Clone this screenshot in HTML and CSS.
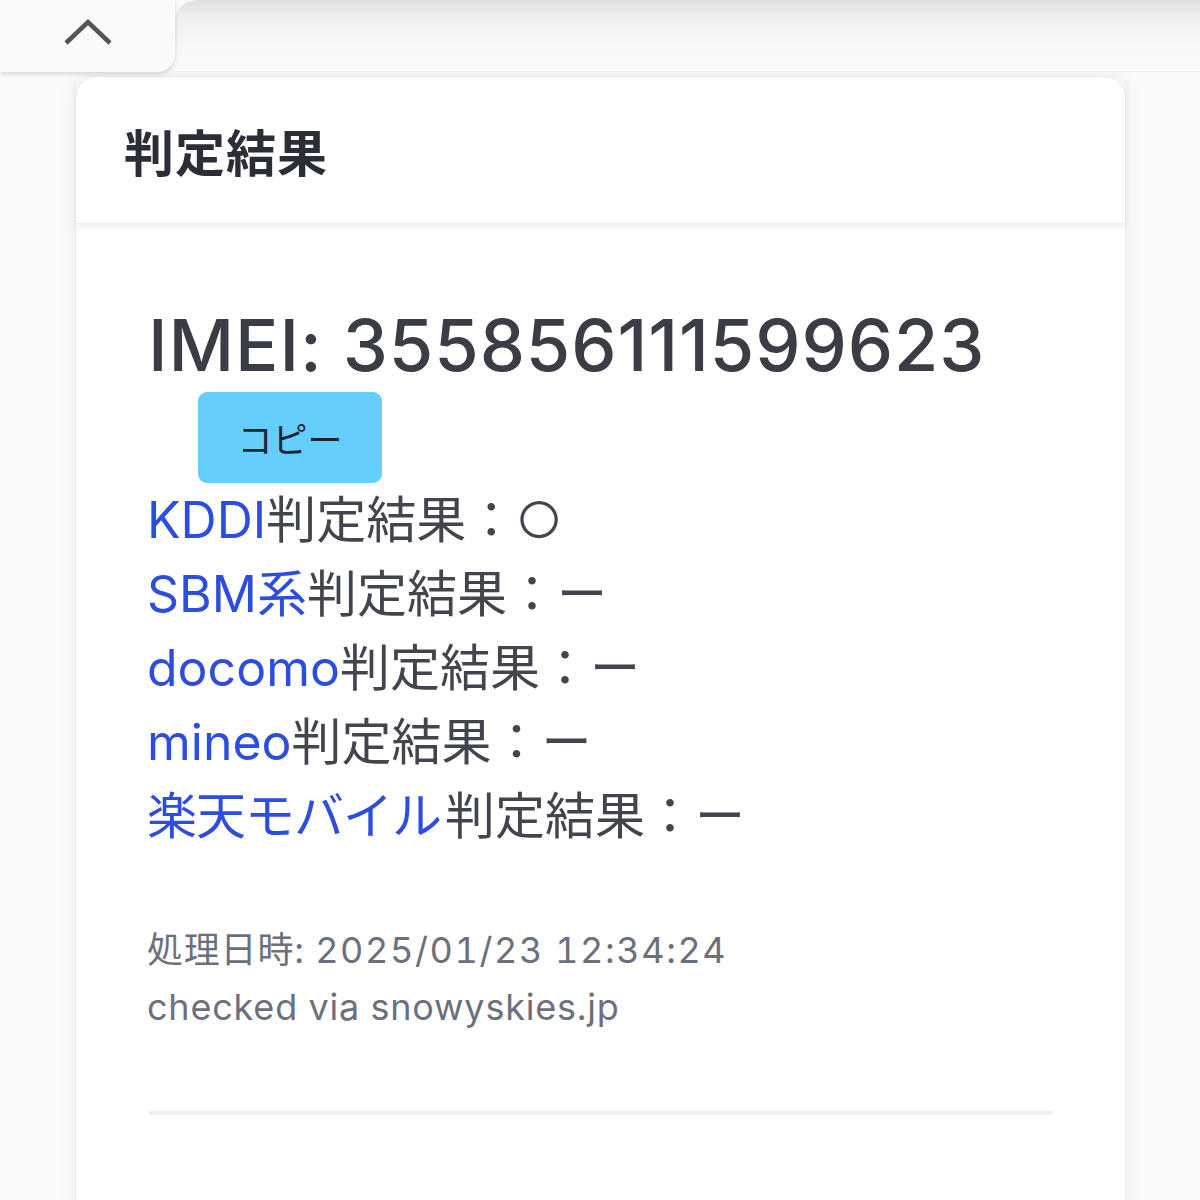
FILE: index.html
```html
<!DOCTYPE html>
<html lang="ja">
<head>
  <meta charset="UTF-8">
  <meta name="viewport" content="width=device-width, initial-scale=1.0">
  <title>判定結果</title>
  <link rel="stylesheet" href="styles.css">
</head>
<body>
  <div class="topbar">
    <div class="tab">
      <svg width="50" height="30" viewBox="0 0 50 30">
        <polyline points="3,26 25,5 47,26" fill="none" stroke="#555" stroke-width="4.5"/>
      </svg>
    </div>
    <div class="bar-rest"></div>
  </div>

  <div class="card">
    <div class="card-header">
      <h1>判定結果</h1>
    </div>
    <div class="card-body">
      <p class="imei">IMEI: 355856111599623</p>
      <button class="copy-btn">コピー</button>

      <ul class="results">
        <li><a href="#">KDDI</a>判定結果：<span class="mark">○</span></li>
        <li><a href="#">SBM系</a>判定結果：ー</li>
        <li><a href="#">docomo</a>判定結果：ー</li>
        <li><a href="#">mineo</a>判定結果：ー</li>
        <li><a href="#" class="gap">楽天モバイル</a>判定結果：ー</li>
      </ul>

      <div class="meta">
        <p>処理日時: <span class="date">2025/01/23 12:34:24</span></p>
        <p>checked via snowyskies.jp</p>
      </div>

      <hr class="divider">
    </div>
  </div>
</body>
</html>
```

FILE: styles.css
```css
body {
  margin: 0;
  padding: 0;
  background-color: #fafafa;
  font-family: Inter, "Noto Sans CJK JP", sans-serif;
  color: #3d4049;
  overflow: hidden;
}

.topbar {
  display: flex;
  height: 72px;
}

.tab {
  width: 175px;
  background: #fafafa;
  border-bottom-right-radius: 18px;
  box-shadow: 0 2px 5px rgba(0, 0, 0, 0.14);
  display: flex;
  justify-content: center;
  padding-top: 17px;
  box-sizing: border-box;
  position: relative;
  z-index: 1;
}

.bar-rest {
  flex: 1;
  border-top-left-radius: 22px;
  background: linear-gradient(to bottom, #e0e0e0 0, #f1f1f1 20px, #f8f8f8 50px, #fafafa 100%);
  border-bottom: 1px solid #f0f0f0;
}

.card {
  width: 1051px;
  margin: 4px 0 0 75px;
  background: #fff;
  border: 1px solid #ececec;
  border-radius: 22px 22px 0 0;
  box-shadow: 0 0 22px rgba(0, 0, 0, 0.06);
  box-sizing: border-box;
  min-height: 1200px;
}

.card-header {
  height: 146px;
  display: flex;
  align-items: center;
  padding-left: 48px;
  box-shadow: 0 3px 6px rgba(0, 0, 0, 0.07);
  border-bottom: 1px solid #eeeeee;
}

.card-header h1 {
  margin: 0;
  font-size: 50px;
  font-weight: 600;
  color: #2b2e36;
  letter-spacing: 1px;
}

.card-body {
  padding: 78px 73px 0 73px;
}

.imei {
  margin: 0 0 0 -1px;
  font-size: 72px;
  font-weight: 500;
  line-height: 86px;
  color: #3a3d46;
  letter-spacing: 0.9px;
}

.copy-btn {
  margin: 4px 0 0 49px;
  width: 184px;
  height: 91px;
  background-color: #66cefd;
  border: none;
  border-radius: 9px;
  font-family: "Noto Sans CJK JP", sans-serif;
  font-size: 35px;
  color: #1c2633;
  padding: 0;
}

.results {
  list-style: none;
  margin: 0 0 0 -2px;
  padding: 0;
  font-size: 50px;
  line-height: 74px;
  color: #42454d;
}

.results a {
  color: #2d4ddf;
  text-decoration: none;
}

.results a.gap {
  margin-right: 4px;
  letter-spacing: -1px;
}

.mark {
  font-weight: 300;
}

.meta {
  margin-top: 69px;
  font-size: 36px;
  line-height: 57px;
  color: #6b707c;
  letter-spacing: 0.8px;
  font-variant-numeric: tabular-nums;
}

.meta .date {
  letter-spacing: 1.6px;
}

.meta p {
  margin: 0 0 0 -2px;
}

.divider {
  margin: 75px 0 0 0;
  border: none;
  height: 4px;
  background: #eef0f0;
}
```
